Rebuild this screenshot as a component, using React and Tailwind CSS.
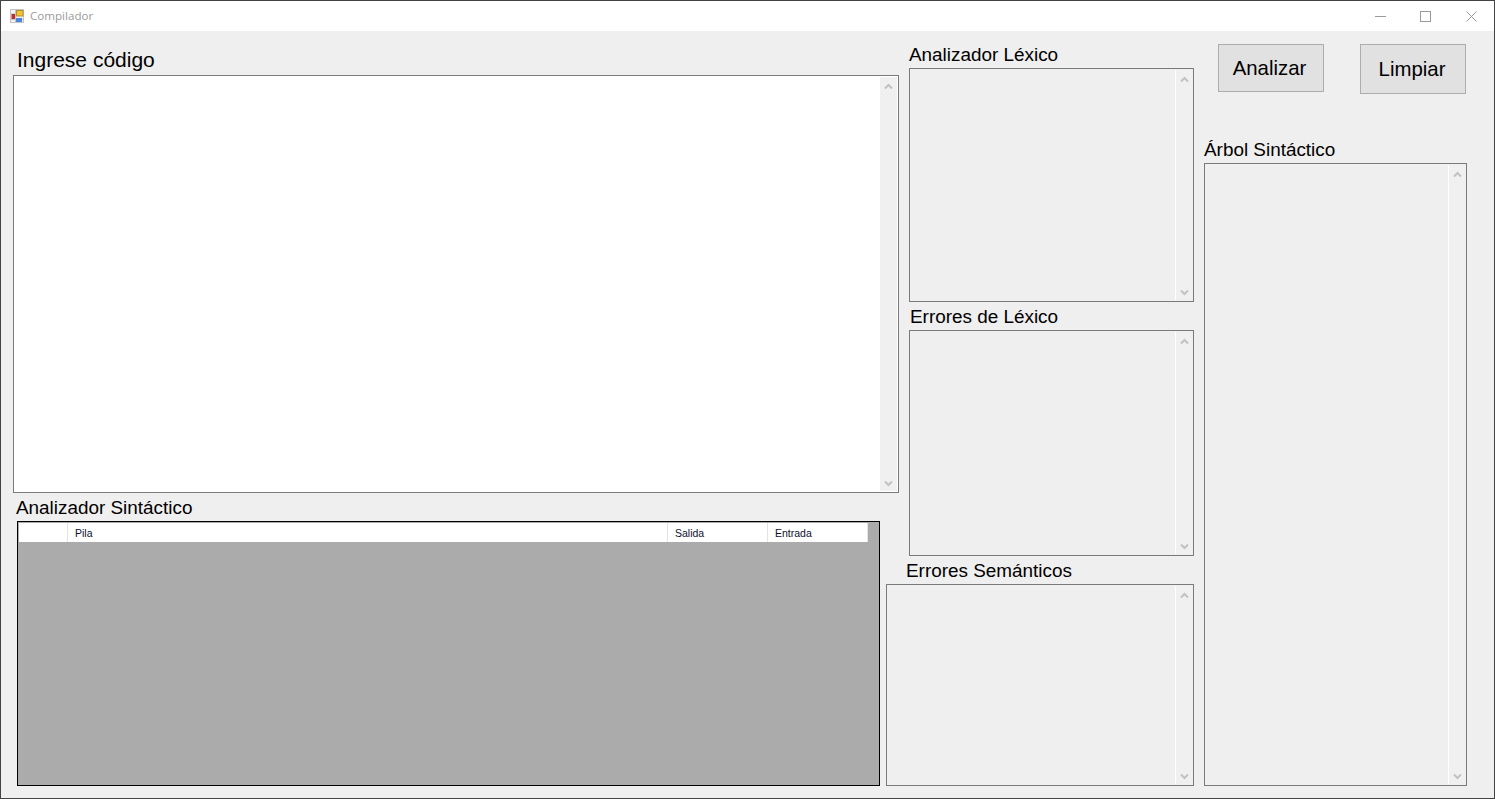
// Compilador window: code input, token lists, parser grid and syntax tree
const BOX_BORDER = 'border border-[#7a7a7a]'

function Chevron({ up }) {
  return (
    <svg width="9" height="7" viewBox="0 0 9 7" className="block">
      <path d={up ? 'M1 5.5L4.5 2L8 5.5' : 'M1 1.5L4.5 5L8 1.5'} fill="none" stroke="#c2c2c2" strokeWidth="2" />
    </svg>
  )
}

function ScrollBar({ line }) {
  return (
    <div className={`w-[17px] h-full flex flex-col justify-between items-center pt-[6px] pb-[4px] bg-[#f0f0f0] ${line ? 'border-l border-white' : ''}`}>
      <Chevron up />
      <Chevron />
    </div>
  )
}

// read-only RichTextBox, grey with a disabled vertical scrollbar
function OutputBox({ className }) {
  return (
    <div className={`${BOX_BORDER} bg-[#efefef] flex justify-end p-px ${className}`}>
      <ScrollBar line />
    </div>
  )
}

function Label({ className, children }) {
  return <p className={`text-[18.9px] text-black whitespace-nowrap ${className}`}>{children}</p>
}

function HeaderCell({ className, children }) {
  return (
    <div className={`h-full pl-[7px] border-r border-[#e3e3e3] text-[10.5px] leading-[20px] text-[#101030] ${className}`}>
      {children}
    </div>
  )
}

export default function App() {
  return (
    <div className="w-[1495px] h-[799px] flex flex-col overflow-hidden bg-[#efefef] border border-[#434343] font-['Liberation_Sans',Arial,sans-serif]">
      {/* Title bar */}
      <div className="h-[30px] shrink-0 bg-white flex items-center pl-[9px]">
        <svg width="14" height="14" viewBox="0 0 14 14" className="shrink-0">
          <rect x="0.5" y="0.5" width="13" height="13" fill="#f2f2f2" stroke="#c4c4c4" />
          <path d="M5.5 1v12M1 5h4M1 10.5h12" stroke="#c4c4c4" />
          <rect x="1.5" y="5" width="3.5" height="5" fill="#c22c2c" />
          <rect x="6.5" y="1.5" width="6.5" height="5.5" fill="#f6c22f" stroke="#b3902f" />
          <rect x="6" y="9" width="6" height="4" fill="#4a86e0" />
        </svg>
        <span className="ml-[6px] text-[11.6px] text-[#9b9b9b] font-['Open_Sans',sans-serif]">Compilador</span>
        <div className="ml-auto flex items-center h-full">
          <div className="w-[45px] flex justify-center">
            <svg width="11" height="11" viewBox="0 0 11 11"><path d="M0 5.5h11" stroke="#9a9a9a" /></svg>
          </div>
          <div className="w-[45px] flex justify-center">
            <svg width="11" height="11" viewBox="0 0 11 11"><rect x="0.5" y="0.5" width="10" height="10" fill="none" stroke="#9a9a9a" /></svg>
          </div>
          <div className="w-[46px] flex justify-center">
            <svg width="11" height="11" viewBox="0 0 11 11"><path d="M0.5 0.5l10 10M10.5 0.5l-10 10" stroke="#9a9a9a" /></svg>
          </div>
        </div>
      </div>

      {/* Form body */}
      <div className="flex-1 flex pl-[12px]">
        {/* Left column: code input and parser table */}
        <div className="w-[873px] shrink-0 flex flex-col">
          <p className="mt-[16px] ml-[4px] text-[21px] leading-[26px] text-black h-[28px]">Ingrese código</p>
          <div className={`w-[886px] h-[418px] ${BOX_BORDER} bg-white flex justify-end p-px`}>
            <ScrollBar />
          </div>
          <Label className="mt-[3px] ml-[3px] h-[25px] leading-[24px]">Analizador Sintáctico</Label>
          <div className="ml-[4px] w-[863px] h-[265px] border border-black bg-[#ababab] p-px">
            <div className="w-[849px] h-[19px] bg-white flex">
              <HeaderCell className="w-[49px]" />
              <HeaderCell className="w-[600px]">Pila</HeaderCell>
              <HeaderCell className="w-[100px]">Salida</HeaderCell>
              <HeaderCell className="w-[100px]">Entrada</HeaderCell>
            </div>
          </div>
        </div>

        {/* Middle column: lexer and error lists */}
        <div className="w-[308px] shrink-0 flex flex-col pt-[11px]">
          <Label className="ml-[23px] h-[26px] leading-[26px]">Analizador Léxico</Label>
          <OutputBox className="ml-[23px] h-[234px]" />
          <Label className="ml-[24px] mt-[2px] h-[26px] leading-[26px]">Errores de Léxico</Label>
          <OutputBox className="ml-[23px] h-[226px]" />
          <Label className="ml-[20px] mt-[2px] h-[26px] leading-[26px]">Errores Semánticos</Label>
          <OutputBox className="h-[202px]" />
        </div>

        {/* Right column: buttons and syntax tree */}
        <div className="ml-[10px] w-[263px] shrink-0 flex flex-col">
          <div className="h-[64px] flex items-start pl-[14px]">
            <button className="mt-[13px] w-[106px] h-[48px] pr-[3px] bg-[#e1e1e1] border border-[#adadad] text-[20.4px] text-black">Analizar</button>
            <button className="mt-[13px] ml-[36px] w-[106px] h-[50px] pr-[2px] bg-[#e1e1e1] border border-[#adadad] text-[20.4px] text-black">Limpiar</button>
          </div>
          <Label className="mt-[42px] h-[26px] leading-[26px]">Árbol Sintáctico</Label>
          <OutputBox className="h-[623px]" />
        </div>
      </div>
    </div>
  )
}
